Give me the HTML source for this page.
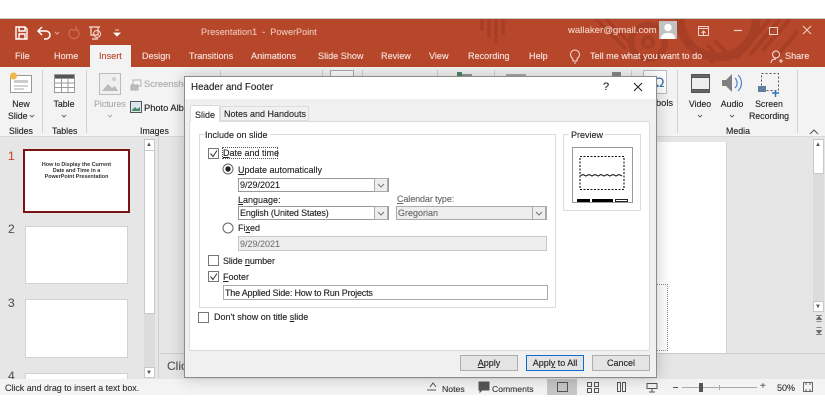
<!DOCTYPE html>
<html><head><meta charset="utf-8"><style>
html,body{margin:0;padding:0;background:#fff}
#r{position:relative;width:825px;height:413px;overflow:hidden;background:#fff;font-family:"Liberation Sans",sans-serif;font-size:9.5px;color:#333;filter:blur(.3px)}
#r div,#r svg{position:absolute}
.t{white-space:nowrap;line-height:12px;-webkit-text-stroke:.12px currentColor}
.w{color:#f6e4de;font-size:9.1px}
.c{text-align:center}
.g{color:#222;font-size:8.8px}
.b{background:#fff;border:1px solid #b5b5b5;box-sizing:border-box}
.cb{width:9px;height:9px;border:1px solid #777;background:#fff}
.sep{width:1px;background:#d2d2d2;top:70px;height:63px}
.dd{width:14px;height:14px;background:#eee;border:1px solid #aaa;box-sizing:border-box}
.d{font-size:9px;color:#222}
u{text-decoration:underline}
</style></head><body><div id="r">
<div style="left:0;top:18px;width:825px;height:1px;background:#c8c8c8"></div>
<div style="left:0;top:19px;width:825px;height:48px;background:#b7472a"></div>
<svg style="left:470px;top:19px" width="355" height="48" viewBox="0 0 355 48" fill="none" stroke="#a63f25"><path d="M12 0v12M19 0v18M26 0v25M33 0v16" stroke-width="3.500"/><circle cx="178" cy="23" r="17" stroke-width="6"/><circle cx="178" cy="23" r="5" stroke-width="4"/><path d="M210 0a38 38 0 0 0 76 0" stroke-width="9"/><path d="M126 0l30 30M136 0l28 28M229 30l14 14M237 26l14 14M245 22l14 14" stroke-width="3.500"/><path d="M300 0l-34 40M310 0l-30 36M320 0l-28 32M328 12l-22 26" stroke-width="4"/></svg>
<!-- QAT -->
<svg style="left:14px;top:25px" width="120" height="16" viewBox="0 0 120 16" fill="none"><path d="M2 2h9l2 2v10H2zM5 2v4h6V2M5 14V9h6v5" stroke="#fff" stroke-width="1.400"/><path d="M25 6h7a4 4 0 0 1 0 8h-2M28 2l-4 4 4 4" stroke="#fff" stroke-width="1.500"/><path d="M41 7l2 2 2-2" stroke="#dfa898"/><path d="M58 4a5 5 0 1 0 4 0M62 1v4h-4" stroke="#c96a50" stroke-width="1.400"/><path d="M75 2h11M77 2v8h7V2M78 14h6" stroke="#f3ddd6" stroke-width="1.200"/><circle cx="83" cy="9" r="3.500" stroke="#f3ddd6"/><path d="M101 5h4M100 8h6l-3 3z" fill="#fff" stroke="#fff" stroke-width=".8"/></svg>
<div class="t w" style="left:201px;top:26px;color:#ecc4b6">Presentation1&nbsp; -&nbsp; PowerPoint</div>
<div class="t w" style="left:568px;top:25px;color:#efd0c5;font-size:9.600px">wallaker@gmail.com</div>
<div style="left:659px;top:21px;width:18px;height:18px;background:#c2c2c2"></div>
<svg style="left:659px;top:21px" width="18" height="18"><circle cx="9" cy="6.500" r="3.700" fill="#fff"/><path d="M2 18c0-5 3-6 7-6s7 1 7 6z" fill="#fff"/></svg>
<svg style="left:695px;top:22px" width="120" height="16" fill="none" stroke="#f0d4ca"><path d="M3.500 4.500h10v9h-10zM3.500 6.500h10M8.500 13V9M6.500 11l2-2 2 2"/><path d="M39 8.500h8" stroke-width="1.200"/><rect x="74.500" y="5.500" width="8" height="7"/></svg>
<svg style="left:801px;top:24px" width="12" height="12" stroke="#f0d4ca"><path d="M2 2l8 8M10 2l-8 8"/></svg>
<!-- tabs -->
<div style="left:90px;top:45px;width:41px;height:23px;background:#f3f3f3"></div>
<div class="t w" style="left:15px;top:50px">File</div>
<div class="t w" style="left:54px;top:50px">Home</div>
<div class="t" style="left:99px;top:50px;color:#b7472a;font-size:9.100px">Insert</div>
<div class="t w" style="left:142px;top:50px">Design</div>
<div class="t w" style="left:189px;top:50px">Transitions</div>
<div class="t w" style="left:251px;top:50px">Animations</div>
<div class="t w" style="left:318px;top:50px">Slide Show</div>
<div class="t w" style="left:381px;top:50px">Review</div>
<div class="t w" style="left:429px;top:50px">View</div>
<div class="t w" style="left:468px;top:50px">Recording</div>
<div class="t w" style="left:529px;top:50px">Help</div>
<svg style="left:569px;top:49px" width="12" height="15" fill="none" stroke="#f6e4de"><path d="M4 10C2 8 1.500 7 1.500 5.500a4.500 4.500 0 0 1 9 0C10.500 7 10 8 8 10v2H4zM5 14h2"/></svg>
<div class="t w" style="left:590px;top:50px">Tell me what you want to do</div>
<svg style="left:770px;top:50px" width="14" height="14" fill="none" stroke="#f6e4de"><circle cx="6" cy="4.500" r="3.500"/><path d="M1 13c0-3 2-4 5-4M9 11h4M11 9v4"/></svg>
<div class="t w" style="left:785px;top:50px">Share</div>
<!-- ribbon -->
<div style="left:0;top:67px;width:825px;height:70px;background:#f3f3f3;border-bottom:1px solid #d8d8d8;box-sizing:border-box"></div>
<div class="sep" style="left:42px"></div><div class="sep" style="left:86px"></div><div class="sep" style="left:220px"></div><div class="sep" style="left:322px"></div><div class="sep" style="left:362px"></div><div class="sep" style="left:437px"></div><div class="sep" style="left:494px"></div><div class="sep" style="left:631px"></div><div class="sep" style="left:677px"></div><div class="sep" style="left:797px"></div>
<div style="left:330px;top:70px;width:24px;height:8px;background:#fff;border:1px solid #aaa;box-sizing:border-box"></div>
<div style="left:457px;top:72px;width:5px;height:5px;background:#4d8a6a"></div>
<div style="left:462px;top:74px;width:10px;height:3px;background:#999"></div>
<div style="left:506px;top:74px;width:20px;height:3px;background:#aaa"></div>
<div style="left:612px;top:72px;width:9px;height:5px;background:#888"></div>
<svg style="left:8px;top:71px" width="26" height="23" fill="none"><rect x="2.500" y="4.500" width="21" height="17" fill="#fff" stroke="#999"/><path d="M6 9h14v3H6z" fill="#ccc"/><path d="M6 15h14M6 18h10" stroke="#aaa"/><circle cx="5.500" cy="5" r="3.500" fill="#f2b84b"/></svg>
<div class="t g c" style="left:3px;top:98px;width:36px">New</div>
<div class="t g" style="left:8px;top:110px">Slide</div>
<svg style="left:29px;top:114px" width="6" height="4" fill="none" stroke="#666"><path d="M1 1l2 2 2-2"/></svg>
<div class="t g" style="left:9px;top:125px">Slides</div>
<svg style="left:54px;top:74px" width="21" height="19" fill="#fff" stroke="#999"><rect x=".5" y=".5" width="20" height="18"/><rect x=".5" y=".5" width="20" height="4" fill="#555"/><path d="M7.500 5v13M14 5v13M1 9h19M1 13.500h19"/></svg>
<div class="t g c" style="left:44px;top:98px;width:40px">Table</div>
<svg style="left:61px;top:114px" width="6" height="4" fill="none" stroke="#666"><path d="M1 1l2 2 2-2"/></svg>
<div class="t g" style="left:52px;top:125px">Tables</div>
<svg style="left:99px;top:73px" width="22" height="22"><rect x=".5" y=".5" width="21" height="21" fill="#f0f0f0" stroke="#bbb"/><path d="M3 18l6-7 4 4 3-2 3 5z" fill="#bbb"/><circle cx="15" cy="6" r="2" fill="#ccc"/></svg>
<div class="t" style="left:94px;top:98px;color:#aaa;font-size:8.800px">Pictures</div>
<svg style="left:107px;top:114px" width="6" height="4" fill="none" stroke="#aaa"><path d="M1 1l2 2 2-2"/></svg>
<svg style="left:130px;top:79px" width="12" height="12" fill="none" stroke="#b0b0b0"><rect x="3" y="1" width="8" height="6"/><rect x="1" y="6" width="7" height="5" fill="#bbb"/></svg>
<div class="t" style="left:144px;top:78px;color:#aaa;font-size:9.300px">Screenshot</div>
<svg style="left:130px;top:101px" width="12" height="12"><rect x=".5" y=".5" width="11" height="11" fill="#dbe6ee" stroke="#555"/><path d="M2 9l3-3 2 2 3-2v4H2z" fill="#4d8a6a"/></svg>
<div class="t g" style="left:144px;top:102px;font-size:9.300px">Photo Album</div>
<div class="t g" style="left:140px;top:125px">Images</div>
<div style="left:643px;top:70px;width:24px;height:24px;background:#fff;border:1px solid #bbb;box-sizing:border-box"></div>
<div class="t" style="left:654px;top:75px;color:#3f73b5;font-size:14px;line-height:14px">Ω</div>
<div class="t g" style="left:656px;top:97px;font-size:9.300px">bols</div>
<svg style="left:691px;top:74px" width="19" height="19" fill="#eee" stroke="#555"><rect x=".5" y=".5" width="18" height="18"/><rect x=".5" y=".5" width="18" height="3" fill="#666"/><rect x=".5" y="15.500" width="18" height="3" fill="#666"/></svg>
<svg style="left:721px;top:73px" width="24" height="20" fill="none"><path d="M1 7h4l6-6v18l-6-6H1z" fill="#808080"/><path d="M14 5a7 7 0 0 1 0 10M17 2a11 11 0 0 1 0 16" stroke="#4a85c5" stroke-width="1.200"/></svg>
<svg style="left:756px;top:73px" width="26" height="24" fill="none"><rect x="5.500" y=".5" width="17" height="17" stroke="#555" stroke-dasharray="2 2"/><rect x="2" y="13" width="8" height="6" fill="#5e7f9e"/><path d="M16 20h7M19.500 17v7" stroke="#2e75b6" stroke-width="1.400"/></svg>
<div class="t g c" style="left:684px;top:98px;width:32px">Video</div><svg style="left:697px;top:114px" width="6" height="4" fill="none" stroke="#666"><path d="M1 1l2 2 2-2"/></svg>
<div class="t g c" style="left:716px;top:98px;width:32px">Audio</div><svg style="left:729px;top:114px" width="6" height="4" fill="none" stroke="#666"><path d="M1 1l2 2 2-2"/></svg>
<div class="t g c" style="left:744px;top:98px;width:50px;white-space:normal">Screen<br>Recording</div>
<div class="t g" style="left:726px;top:125px">Media</div>
<svg style="left:809px;top:129px" width="10" height="6" fill="none" stroke="#555"><path d="M1 5l4-4 4 4"/></svg>
<!-- body -->
<div style="left:0;top:137px;width:825px;height:242px;background:#e6e6e6"></div>
<div style="left:158px;top:138px;width:1px;height:240px;background:#d0d0d0"></div>
<div style="left:144px;top:139px;width:11px;height:239px;background:#dcdcdc"></div>
<div class="b" style="left:144px;top:139px;width:11px;height:175px;border-color:#c8c8c8"></div>
<div class="b" style="left:144px;top:139px;width:11px;height:12px;border-color:#c8c8c8"></div>
<div class="t" style="left:146px;top:139px;font-size:6px;color:#555">▲</div>
<div class="b" style="left:144px;top:367px;width:11px;height:11px;border-color:#c8c8c8"></div>
<div class="t" style="left:146px;top:367px;font-size:6px;color:#555">▼</div>
<div class="t" style="left:8px;top:149px;font-size:12px;color:#d0492c;line-height:14px">1</div>
<div class="t" style="left:8px;top:222px;font-size:12px;line-height:14px;color:#555">2</div>
<div class="t" style="left:8px;top:296px;font-size:12px;line-height:14px;color:#555">3</div>
<div class="t" style="left:8px;top:369px;font-size:12px;line-height:14px;color:#555">4</div>
<div style="left:23px;top:149px;width:107px;height:64px;background:#fff;border:2px solid #7a1414;box-sizing:border-box"></div>
<div class="t c" style="left:25px;top:162px;width:103px;font-size:5.400px;line-height:6px;color:#333;font-weight:bold;white-space:normal;-webkit-text-stroke:0">How to Display the Current<br>Date and Time in a<br>PowerPoint Presentation</div>
<div style="left:25px;top:226px;width:103px;height:58px;background:#fff;border:1px solid #d2d2d2;box-sizing:border-box"></div>
<div style="left:25px;top:299px;width:103px;height:59px;background:#fff;border:1px solid #d2d2d2;box-sizing:border-box"></div>
<div style="left:25px;top:373px;width:103px;height:7px;background:#fff;border:1px solid #d2d2d2;box-sizing:border-box"></div>
<div style="left:190px;top:142px;width:537px;height:211px;background:#fff;border-right:1px solid #cfcfcf;box-sizing:border-box"></div>
<div style="left:620px;top:284px;width:48px;height:67px;border:1px dotted #888;box-sizing:border-box;border-left:0"></div>
<div style="left:160px;top:353px;width:665px;height:1px;background:#ccc"></div>
<div class="t" style="left:167px;top:359px;font-size:12px;color:#555;line-height:14px">Click</div>
<div style="left:813px;top:139px;width:11px;height:173px;background:#dcdcdc"></div>
<div class="b" style="left:813px;top:139px;width:11px;height:35px;border-color:#c8c8c8"></div>
<div class="b" style="left:813px;top:301px;width:11px;height:11px;border-color:#c8c8c8"></div>
<div class="t" style="left:815px;top:139px;font-size:6px;color:#555">▲</div>
<div class="t" style="left:815px;top:301px;font-size:6px;color:#555">▼</div>
<svg style="left:814px;top:314px" width="10" height="22" stroke="#666" fill="#666"><path d="M2 1.500h6M5 2.500l-2.500 3h5zM2.500 7.500h5M2.500 13.500h5M5 19.500l-2.500-3h5zM2 20.500h6" stroke-width=".8"/></svg>
<!-- status -->
<div style="left:0;top:379px;width:825px;height:16px;background:#f3f3f3"></div>
<div class="t" style="left:5px;top:382px;font-size:8.900px;color:#333">Click and drag to insert a text box.</div>
<div style="left:547px;top:379px;width:30px;height:16px;background:#c6c6c6"></div>
<svg style="left:425px;top:380px" width="300" height="14" fill="none" stroke="#555"><path d="M5 7l3-4 3 4M2 10h9"/><path d="M54 2h10v8h-7l-2 2v-2h-1z" fill="#555"/><rect x="132.500" y="2.500" width="10" height="9"/><path d="M162.500 2.500h4v4h-4zM169.500 2.500h4v4h-4zM162.500 8.500h4v4h-4zM169.500 8.500h4v4h-4zM192.500 2.500h3v9h-3zM197.500 2.500h3v9h-3zM222 3.500h10v5h-10zM227 8v4M224 12h6M248 7.500h5"/></svg>
<div class="t" style="left:442px;top:383px;font-size:8.700px">Notes</div>
<div class="t" style="left:492px;top:383px;font-size:8.600px">Comments</div>
<div style="left:682px;top:387px;width:75px;height:1px;background:#aaa"></div>
<div style="left:699px;top:383px;width:4px;height:9px;background:#555"></div>
<div style="left:719px;top:385px;width:1px;height:5px;background:#aaa"></div>
<div class="t" style="left:760px;top:381px;font-size:10px;color:#555">+</div>
<div class="t" style="left:777px;top:382px;font-size:9px">50%</div>
<svg style="left:803px;top:382px" width="10" height="10" fill="none" stroke="#666"><rect x=".5" y=".5" width="9" height="9"/><path d="M2 2h2M6 8h2M2 8h2M6 2h2"/></svg>
<!-- dialog -->
<div style="left:184px;top:76px;width:473px;height:302px;background:#f0f0f0;border:1px solid #8c8c8c;box-shadow:0 0 14px rgba(0,0,0,.22);box-sizing:border-box"></div>
<div style="left:185px;top:77px;width:471px;height:22px;background:#fff"></div>
<div class="t" style="left:191px;top:82px;font-size:9.800px;color:#222">Header and Footer</div>
<div class="t" style="left:603px;top:81px;font-size:11px;color:#222">?</div>
<svg style="left:633px;top:82px" width="10" height="10" stroke="#222"><path d="M1 1l8 8M9 1l-8 8"/></svg>
<div style="left:189px;top:121px;width:461px;height:230px;background:#fff;border:1px solid #dcdcdc;box-sizing:border-box"></div>
<div class="t d" style="left:190px;top:105px;width:30px;height:17px;background:#fff;border:1px solid #dcdcdc;border-bottom:0;box-sizing:border-box;padding:3px 0 0 4px">Slide</div>
<div class="t d" style="left:220px;top:106px;width:89px;height:15px;background:#f0f0f0;border:1px solid #dcdcdc;box-sizing:border-box;padding:1px 0 0 3px">Notes and Handouts</div>
<!-- include group -->
<div style="left:199px;top:134px;width:357px;height:174px;border:1px solid #dcdcdc;box-sizing:border-box"></div>
<div class="t d" style="left:205px;top:129px;background:#fff;padding:0 2px 0 0">Include on slide</div>
<div class="cb" style="left:208px;top:148px"></div>
<svg style="left:208px;top:148px" width="11" height="11" fill="none" stroke="#333"><path d="M2.500 5.500l2.500 3 4-6"/></svg>
<div style="left:222px;top:147px;width:56px;height:12px;border:1px dotted #555;box-sizing:border-box"></div>
<div class="t d" style="left:223px;top:147px"><u>D</u>ate and time</div>
<svg style="left:222px;top:163px" width="12" height="12" fill="#fff" stroke="#666"><circle cx="6" cy="6" r="5"/><circle cx="6" cy="6" r="2.700" fill="#222" stroke="none"/></svg>
<div class="t d" style="left:238px;top:164px"><u>U</u>pdate automatically</div>
<div class="b" style="left:238px;top:178px;width:151px;height:14px;border-color:#999"></div>
<div class="t d" style="left:240px;top:179px">9/29/2021</div>
<div class="dd" style="left:374px;top:178px"></div><svg style="left:377px;top:183px" width="8" height="5" fill="none" stroke="#777"><path d="M1 1l3 3 3-3"/></svg>
<div class="t d" style="left:238px;top:194px"><u>L</u>anguage:</div>
<div class="b" style="left:238px;top:206px;width:151px;height:14px;border-color:#999"></div>
<div class="t d" style="left:240px;top:207px;letter-spacing:-.15px">English (United States)</div>
<div class="dd" style="left:374px;top:206px"></div><svg style="left:377px;top:211px" width="8" height="5" fill="none" stroke="#777"><path d="M1 1l3 3 3-3"/></svg>
<div class="t d" style="left:397px;top:193px;color:#666;letter-spacing:-.1px"><u>C</u>alendar type:</div>
<div style="left:396px;top:206px;width:151px;height:14px;background:#eee;border:1px solid #aaa;box-sizing:border-box"></div>
<div class="t d" style="left:398px;top:207px;color:#666">Gregorian</div>
<div class="dd" style="left:532px;top:206px"></div><svg style="left:535px;top:211px" width="8" height="5" fill="none" stroke="#777"><path d="M1 1l3 3 3-3"/></svg>
<svg style="left:222px;top:222px" width="12" height="12" fill="#fff" stroke="#666"><circle cx="6" cy="6" r="5"/></svg>
<div class="t d" style="left:238px;top:222px">Fi<u>x</u>ed</div>
<div style="left:238px;top:236px;width:309px;height:15px;background:#eee;border:1px solid #c8c8c8;box-sizing:border-box"></div>
<div class="t d" style="left:240px;top:238px;color:#777">9/29/2021</div>
<div class="cb" style="left:208px;top:255px"></div>
<div class="t d" style="left:223px;top:255px;letter-spacing:-.1px">Slide <u>n</u>umber</div>
<div class="cb" style="left:208px;top:271px"></div>
<svg style="left:208px;top:271px" width="11" height="11" fill="none" stroke="#333"><path d="M2.500 5.500l2.500 3 4-6"/></svg>
<div class="t d" style="left:223px;top:271px"><u>F</u>ooter</div>
<div class="b" style="left:223px;top:285px;width:325px;height:15px;border-color:#aaa"></div>
<div class="t d" style="left:225px;top:287px;letter-spacing:-.2px">The Applied Side: How to Run Projects</div>
<div class="cb" style="left:198px;top:312px"></div>
<div class="t d" style="left:214px;top:311px">Don't show on title <u>s</u>lide</div>
<!-- preview -->
<div style="left:563px;top:134px;width:78px;height:77px;border:1px solid #dcdcdc;box-sizing:border-box"></div>
<div class="t d" style="left:569px;top:129px;background:#fff;padding:0 2px">Preview</div>
<svg style="left:572px;top:147px" width="61" height="56" fill="none"><rect x=".5" y=".5" width="60" height="55" fill="#fff" stroke="#9a9aa0"/><path d="M8 9.500h44v33H8z" stroke="#111" stroke-width="1.100" stroke-dasharray="2 1.500"/><path d="M8 29l3-1.500 3 1.500 3-1.500 3 1.500 3-1.500 3 1.500 3-1.500 3 1.500 3-1.500 3 1.500 3-1.500 3 1.500 3-1.500 3 1.500" stroke="#222" stroke-width="1.100"/><rect x="5" y="52" width="13" height="3" fill="#000"/><rect x="20" y="52" width="21" height="3" fill="#000"/><rect x="43.500" y="52.500" width="12" height="2" stroke="#222"/></svg>
<!-- buttons -->
<div class="t c d" style="left:460px;top:355px;width:58px;height:16px;background:#e4e4e4;border:1px solid #adadad;box-sizing:border-box;padding-top:1px"><u>A</u>pply</div>
<div class="t c d" style="left:526px;top:355px;width:58px;height:16px;background:#e4e4e4;border:1.500px solid #0a6fd1;box-sizing:border-box;padding-top:1px">Appl<u>y</u> to All</div>
<div class="t c d" style="left:592px;top:355px;width:58px;height:16px;background:#e4e4e4;border:1px solid #adadad;box-sizing:border-box;padding-top:1px">Cancel</div>
</div></body></html>
